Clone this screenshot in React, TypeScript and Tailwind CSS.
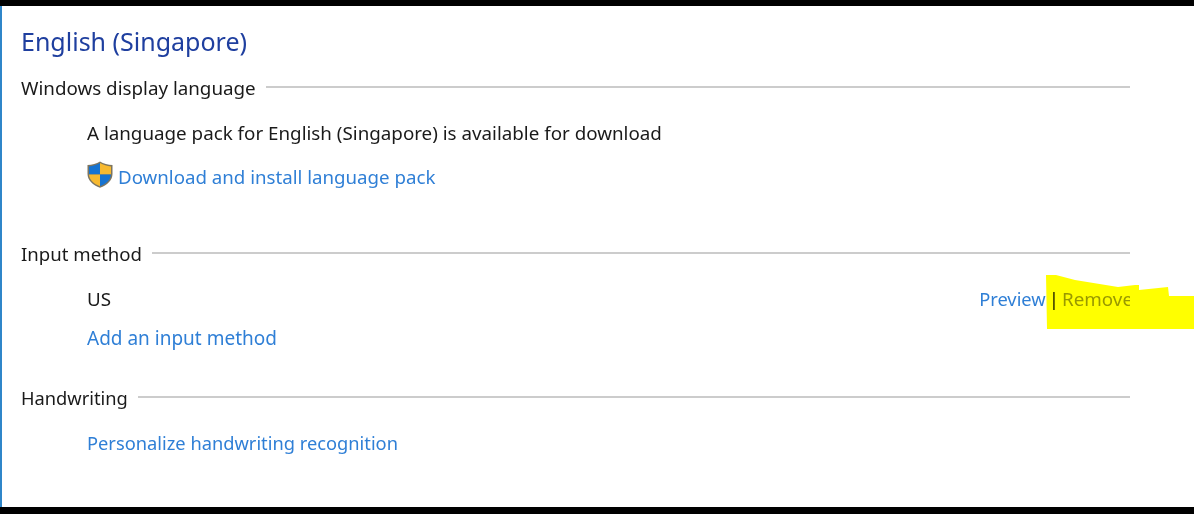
import React from 'react';

function SectionHead({ title, size = 'text-[18.8px]' }: { title: string; size?: string }) {
  return (
    <div className="flex items-center gap-[10px] h-[24px]">
      <span className={`${size} text-[#1a1a1a] whitespace-nowrap`}>{title}</span>
      <div className="flex-1 h-[2px] mb-[2px] bg-[#cccccc]" />
    </div>
  );
}

function Shield() {
  return (
    <svg width="26" height="27" viewBox="0 0 26 27" className="shrink-0 mb-[5px]">
      <path d="M13 0.5 C9.500 2.800 5 4 0.500 4 V13 C0.500 19.500 6 24 13 26.800 C20 24 25.500 19.500 25.500 13 V4 C21 4 16.500 2.800 13 0.500 Z" fill="#7d7560" />
      <path d="M13 2 C9.800 4 6 5.200 2 5.400 V13.500 H13 Z" fill="#1673d1" />
      <path d="M13 2 C16.200 4 20 5.200 24 5.400 V13.500 H13 Z" fill="#f7b92f" />
      <path d="M2 13.500 H13 V25.200 C7 22.800 2.200 19 2 13.500 Z" fill="#f7b92f" />
      <path d="M24 13.500 H13 V25.200 C19 22.800 23.800 19 24 13.500 Z" fill="#1673d1" />
    </svg>
  );
}

export default function App() {
  return (
    <div className="w-[1194px] h-[514px] bg-black pt-[6px] pb-[7px] overflow-hidden font-['Noto_Sans','Open_Sans',sans-serif] text-[18.8px] leading-[24px]">
      <div className="relative h-[501px] bg-white border-l-2 border-[#2f86c9] pl-[19px] pr-[64px]">
        <h1 className="pt-[19px] text-[25px] leading-[32px] text-[#1f3f9f]">English (Singapore)</h1>

        <div className="mt-[19px]">
          <SectionHead title="Windows display language" />
          <div className="pl-[66px]">
            <p className="mt-[21px] text-[#1a1a1a]">A language pack for English (Singapore) is available for download</p>
            <div className="mt-[18px] flex items-center gap-[5px] text-[18.7px] text-[#2f7fd6] h-[28px]">
              <Shield />
              <span>Download and install language pack</span>
            </div>
          </div>
        </div>

        <div className="mt-[51px]">
          <SectionHead title="Input method" size="text-[18.6px]" />
          <div className="pl-[66px]">
            <div className="mt-[21px] flex justify-between overflow-hidden">
              <span className="text-[#1a1a1a]">US</span>
              <span className="flex whitespace-nowrap -mr-[3px]">
                <span className="text-[18.3px] text-[#2f7fd6]">Preview</span>
                <span className="text-[#1a1a1a] ml-[3px] mr-[3px]">|</span>
                <span className="text-[#999999]">Remove</span>
              </span>
            </div>
            <p className="mt-[15px] text-[19px] text-[#2f7fd6]">Add an input method</p>
          </div>
        </div>

        <div className="mt-[36px]">
          <SectionHead title="Handwriting" size="text-[18.3px]" />
          <p className="mt-[21px] pl-[66px] text-[18.3px] text-[#2f7fd6]">Personalize handwriting recognition</p>
        </div>

        {/* highlighter scribble over the Remove link */}
        <svg
          className="absolute left-[-2px] top-[-6px] mix-blend-multiply pointer-events-none"
          width="1194"
          height="514"
          viewBox="0 0 1194 514"
        >
          <polygon
            points="1046,275 1056,275 1075,280 1118,287 1135,285 1139,285 1139,290 1168,287 1169,296 1194,296 1194,329 1047,329"
            fill="#ffff00"
          />
        </svg>
      </div>
    </div>
  );
}
